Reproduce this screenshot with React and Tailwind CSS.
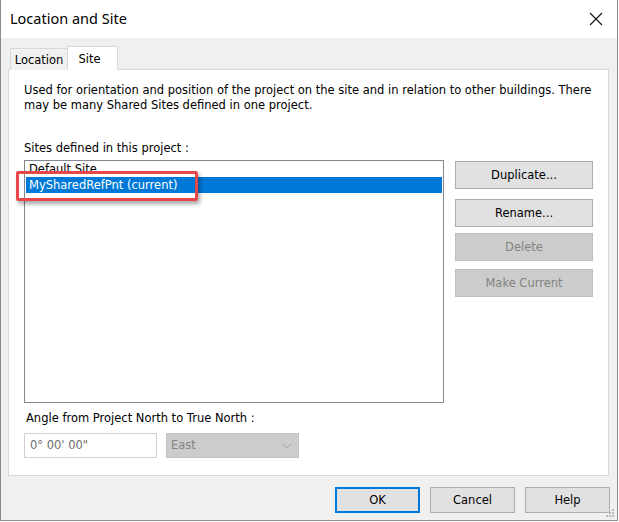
import React from "react";

const ui = { fontFamily: '"DejaVu Sans", Verdana, sans-serif' };

function Btn({ label, disabled, className = "" }) {
  return (
    <div
      className={`flex items-center justify-center border text-[11.5px] pt-px ${
        disabled
          ? "bg-[#cccccc] border-[#bfbfbf] text-[#838383]"
          : "bg-[#e1e1e1] border-[#adadad] text-black"
      } ${className}`}
    >
      {label}
    </div>
  );
}

function Grip() {
  const dots = [
    [6, 0],
    [3, 3],
    [6, 3],
    [0, 6],
    [3, 6],
    [6, 6],
  ];
  return (
    <svg width="9" height="9" className="absolute right-[2px] bottom-[2px]">
      {dots.map(([x, y], i) => (
        <rect key={i} x={x} y={y} width="2" height="2" fill="#b8b8b8" />
      ))}
    </svg>
  );
}

export default function App() {
  return (
    <div className="w-[619px] h-[522px] bg-white" style={ui}>
      <div className="relative w-[618px] h-[521px] flex flex-col border-x border-b border-[#8c8c8c] bg-[#f0f0f0]">
        {/* title bar */}
        <div className="h-[38px] bg-white flex items-center justify-between pl-[9px] pr-[14px]">
          <span
            className="text-[14.5px] text-black"
            style={{ fontFamily: '"Noto Sans", "Open Sans", sans-serif' }}
          >
            Location and Site
          </span>
          <svg width="14" height="14" viewBox="0 0 14 14">
            <path d="M1 1 L13 13 M13 1 L1 13" stroke="#111" strokeWidth="1.1" />
          </svg>
        </div>

        <div className="flex-1 flex flex-col px-[7px]">
          {/* tabs */}
          <div className="flex items-end mt-[8px] h-[24px] pl-[2px] relative z-10 -mb-px">
            <div className="h-[22px] w-[58px] border border-b-0 border-[#d9d9d9] bg-[#f0f0f0] flex items-center justify-center text-[11.5px] pt-[2px]">
              Location
            </div>
            <div className="h-[24px] w-[51px] -ml-px border border-b-0 border-[#d9d9d9] bg-white flex items-start justify-center text-[11.5px] pt-[4px] pr-[6px]">
              Site
            </div>
          </div>

          {/* panel */}
          <div className="w-[601px] h-[407px] border border-[#d9d9d9] bg-white pl-[15px] pt-[13px] flex flex-col">
            <p className="text-[11.5px] leading-[15px] text-black w-[572px]">
              Used for orientation and position of the project on the site and in relation to other buildings. There
              may be many Shared Sites defined in one project.
            </p>

            <div className="text-[11.5px] leading-[15px] mt-[28px]">Sites defined in this project :</div>

            <div className="flex mt-[4px] gap-[11px]">
              <div className="relative w-[420px] h-[243px] border border-[#828790] bg-white pt-px px-px text-[11.5px]">
                <div className="h-[15px] leading-[15px] pl-[3px]">Default Site</div>
                <div className="h-[16px] leading-[16px] pl-[3px] bg-[#0078d7] text-white">
                  MySharedRefPnt (current)
                </div>
                <div className="absolute left-[-9px] top-[10px] w-[182px] h-[30px] border-[3px] border-[#e8474a] rounded-[2px] shadow-[2px_3px_4px_rgba(0,0,0,0.35)]" />
              </div>

              <div className="flex flex-col pt-px">
                <Btn label="Duplicate..." className="w-[138px] h-[28px]" />
                <Btn label="Rename..." className="w-[138px] h-[28px] mt-[10px]" />
                <Btn label="Delete" disabled className="w-[138px] h-[28px] mt-[6px]" />
                <Btn label="Make Current" disabled className="w-[138px] h-[28px] mt-[8px]" />
              </div>
            </div>

            <div className="text-[11.5px] leading-[15px] mt-[8px] pl-[2px]">
              Angle from Project North to True North :
            </div>

            <div className="flex gap-[9px] mt-[7px]">
              <div className="w-[133px] h-[25px] border border-[#cfcfcf] bg-white flex items-center pl-[5px] text-[11.5px] text-[#6d6d6d]">
                0° 00' 00"
              </div>
              <div className="w-[133px] h-[25px] bg-[#cccccc] border border-[#c4c4c4] flex items-center justify-between pl-[4px] pr-[6px] text-[11.5px] text-[#838383]">
                <span>East</span>
                <svg width="10" height="6" viewBox="0 0 10 6">
                  <path d="M0.5 0.5 L5 5 L9.5 0.5" fill="none" stroke="#a8a8a8" strokeWidth="1" />
                </svg>
              </div>
            </div>
          </div>

          {/* bottom buttons */}
          <div className="flex justify-end gap-[10px] mt-[11px]">
            <div className="w-[85px] h-[26px] border-2 border-[#0078d7] bg-[#e1e1e1] flex items-center justify-center text-[11.5px] pt-px">
              OK
            </div>
            <Btn label="Cancel" className="w-[85px] h-[26px]" />
            <Btn label="Help" className="w-[85px] h-[26px]" />
          </div>
        </div>
        <Grip />
      </div>
    </div>
  );
}
